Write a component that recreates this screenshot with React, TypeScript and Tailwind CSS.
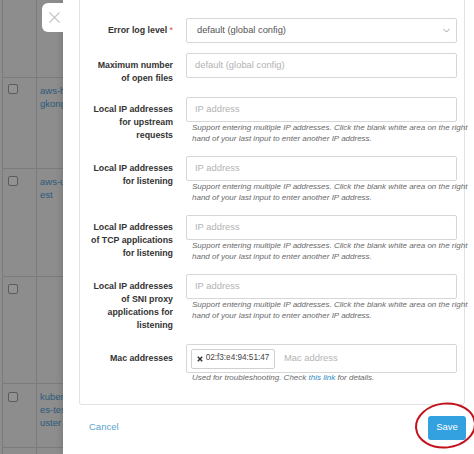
import React from "react";

const HELP = (
  <div className="mt-[1px] pl-[6px] text-[8px] leading-[10.5px] italic text-[#696969] whitespace-nowrap">
    Support entering multiple IP addresses. Click the blank white area on the right
    <br />
    hand of your last input to enter another IP address.
  </div>
);

function Label({ lines, pt = "pt-[6px]" }: { lines: React.ReactNode[]; pt?: string }) {
  return (
    <div className={`w-[93px] shrink-0 text-right text-[8.8px] font-bold leading-[13px] text-[#333] ${pt}`}>
      {lines.map((l, i) => (
        <div key={i}>{l}</div>
      ))}
    </div>
  );
}

function IpInput() {
  return (
    <div className="flex h-[25px] items-center rounded-[2px] border border-[#d6d6d6] pl-[8px] text-[9.4px] text-[#b3b3b3]">
      IP address
    </div>
  );
}

function Row({ children, mb = "mb-[12px]" }: { children: React.ReactNode; mb?: string }) {
  return <div className={`flex gap-[13px] ${mb}`}>{children}</div>;
}

function Checkbox() {
  return <div className="h-[10px] w-[10px] rounded-[2px] border border-[#5c5c5c] bg-[#929292]" />;
}

function TableRow({ h, pt, lines }: { h: string; pt: string; lines: string[] }) {
  return (
    <div className={`flex border-b border-[#7b7b7b] ${h}`}>
      <div className={`w-[34px] shrink-0 border-r border-[#7b7b7b] pl-[5px] ${pt}`}>
        <Checkbox />
      </div>
      <div className="pl-[3px] pt-[6px] text-[9.5px] leading-[13px] text-[#2c5a7c] whitespace-nowrap">
        {lines.map((l, i) => (
          <div key={i}>{l}</div>
        ))}
      </div>
    </div>
  );
}

export default function App() {
  return (
    <div className="relative flex h-[454px] w-[474px] overflow-hidden font-['Liberation_Sans',Arial,sans-serif]">
      {/* background table under overlay */}
      <div className="w-[63px] shrink-0 overflow-hidden bg-[#8d8d8d] pl-[2px]">
        <div className="h-full border-l border-[#7b7b7b]">
          <div className="flex h-[78px] border-b border-[#7b7b7b]">
            <div className="w-[34px] shrink-0 border-r border-[#7b7b7b]" />
          </div>
          <TableRow h="h-[91px]" pt="pt-[6px]" lines={["aws-hk-", "gkong-1"]} />
          <TableRow h="h-[108px]" pt="pt-[7px]" lines={["aws-us-t", "est"]} />
          <TableRow h="h-[107px]" pt="pt-[7px]" lines={[]} />
          <TableRow h="h-[64px]" pt="pt-[8px]" lines={["kubernet", "es-test-cl", "uster"]} />
          <div className="flex h-[20px]">
            <div className="w-[34px] shrink-0 border-r border-[#7b7b7b]" />
          </div>
        </div>
      </div>

      {/* drawer */}
      <div className="relative flex min-w-0 flex-1 flex-col bg-white pl-[16px] pr-[9px] shadow-[-2px_0_6px_rgba(0,0,0,0.12)]">
        <div className="absolute left-[-21px] top-[3px] flex h-[29px] w-[22px] items-center justify-center rounded-l-[6px] bg-white">
          <svg width="11" height="11" viewBox="0 0 11 11" className="ml-[2px]">
            <path d="M0.5 0.5 L10.5 10.5 M10.5 0.5 L0.5 10.5" stroke="#c4c4c4" strokeWidth="1.1" fill="none" />
          </svg>
        </div>

        <div className="min-w-0 rounded-b-[3px] border border-t-0 border-[#e3e3e3] pb-[20px] pr-[7px] pt-[18px]">
          <Row mb="mb-[10px]">
            <Label
              lines={[
                <span>
                  Error log level <span className="text-[#e04a4a] font-normal">*</span>
                </span>,
              ]}
            />
            <div className="flex h-[25px] min-w-0 flex-1 items-center justify-between rounded-[2px] border border-[#d6d6d6] pl-[10px] pr-[6px] text-[9.3px] text-[#555]">
              <span>default (global config)</span>
              <svg width="7" height="5" viewBox="0 0 7 5">
                <path d="M0.5 1 L3.5 4 L6.5 1" stroke="#999" strokeWidth="0.9" fill="none" />
              </svg>
            </div>
          </Row>

          <Row>
            <Label lines={["Maximum number", "of open files"]} />
            <div className="min-w-0 flex-1">
              <div className="flex h-[25px] items-center rounded-[2px] border border-[#d6d6d6] pl-[8px] text-[9.4px] text-[#b3b3b3]">
                default (global config)
              </div>
            </div>
          </Row>

          <Row>
            <Label lines={["Local IP addresses", "for upstream", "requests"]} />
            <div className="min-w-0 flex-1">
              <IpInput />
              {HELP}
            </div>
          </Row>

          <Row>
            <Label lines={["Local IP addresses", "for listening"]} />
            <div className="min-w-0 flex-1">
              <IpInput />
              {HELP}
            </div>
          </Row>

          <Row>
            <Label lines={["Local IP addresses", "of TCP applications", "for listening"]} />
            <div className="min-w-0 flex-1">
              <IpInput />
              {HELP}
            </div>
          </Row>

          <Row>
            <Label lines={["Local IP addresses", "of SNI proxy", "applications for", "listening"]} />
            <div className="min-w-0 flex-1">
              <IpInput />
              {HELP}
            </div>
          </Row>

          <Row mb="mb-0">
            <Label lines={["Mac addresses"]} pt="pt-[8px]" />
            <div className="min-w-0 flex-1">
              <div className="flex h-[29px] items-center gap-[9px] rounded-[2px] border border-[#d6d6d6] pl-[4px]">
                <div className="flex h-[20px] w-[84px] items-center justify-center gap-[3px] rounded-[2px] border border-[#d0d0d0] text-[8.2px] text-[#444]">
                  <svg width="6" height="6" viewBox="0 0 6 6">
                    <path d="M0.8 0.8 L5.2 5.2 M5.2 0.8 L0.8 5.2" stroke="#333" strokeWidth="1.5" fill="none" />
                  </svg>
                  <span>02:f3:e4:94:51:47</span>
                </div>
                <span className="text-[9.4px] text-[#b3b3b3]">Mac address</span>
              </div>
              <div className="pl-[6px] text-[8px] leading-[10.5px] italic text-[#696969] whitespace-nowrap">
                Used for troubleshooting. Check <span className="text-[#2b8bc4]">this link</span> for details.
              </div>
            </div>
          </Row>
        </div>

        <div className="mt-[11px] flex items-center justify-between pl-[10px]">
          <span className="text-[9.5px] text-[#5aa3cf]">Cancel</span>
          <button className="mr-[-1px] flex h-[24px] w-[38px] items-center justify-center rounded-[3px] bg-[#33a0e0] text-[9.5px] text-white">
            Save
          </button>
        </div>
      </div>

      <svg className="absolute left-[414px] top-[401px]" width="62" height="50" viewBox="0 0 62 50">
        <ellipse cx="31.5" cy="24.5" rx="29.5" ry="22" stroke="#c2121c" strokeWidth="2" fill="none" transform="rotate(-6 31.5 24.5)" />
      </svg>
    </div>
  );
}
